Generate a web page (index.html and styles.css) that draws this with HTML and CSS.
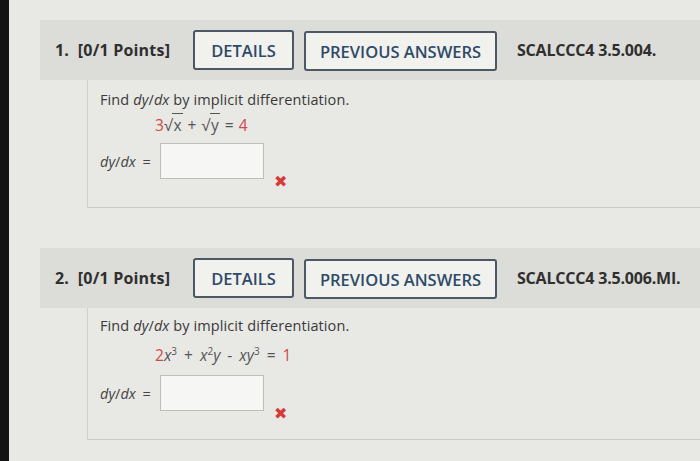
FILE: index.html
```html
<!DOCTYPE html>
<html>
<head>
<meta charset="utf-8">
<link rel="stylesheet" href="styles.css">
</head>
<body>
<div class="screen">
  <div class="bezel"></div>
  <div class="main">
    <div class="question">
      <div class="qhead">
        <div class="qnum">1.&nbsp; [0/1 Points]</div>
        <div class="btn btn-details">DETAILS</div>
        <div class="btn btn-prev">PREVIOUS ANSWERS</div>
        <div class="code">SCALCCC4 3.5.004.</div>
      </div>
      <div class="qbody">
        <div class="prompt">Find <i>dy</i>/<i>dx</i> by implicit differentiation.</div>
        <div class="eq"><span class="num">3</span>√<span class="rad">x</span> + √<span class="rad">y</span> = <span class="num">4</span></div>
        <div class="answer">
          <div class="lbl"><i>dy</i>/<i>dx</i> =</div>
          <div class="box"></div>
          <div class="wrong">✖</div>
        </div>
      </div>
    </div>
    <div class="question q2">
      <div class="qhead">
        <div class="qnum">2.&nbsp; [0/1 Points]</div>
        <div class="btn btn-details">DETAILS</div>
        <div class="btn btn-prev">PREVIOUS ANSWERS</div>
        <div class="code">SCALCCC4 3.5.006.MI.</div>
      </div>
      <div class="qbody">
        <div class="prompt">Find <i>dy</i>/<i>dx</i> by implicit differentiation.</div>
        <div class="eq eq2"><span class="num">2</span><i>x</i><sup>3</sup> + <i>x</i><sup>2</sup><i>y</i> - <i>xy</i><sup>3</sup> = <span class="num">1</span></div>
        <div class="answer">
          <div class="lbl"><i>dy</i>/<i>dx</i> =</div>
          <div class="box"></div>
          <div class="wrong">✖</div>
        </div>
      </div>
    </div>
  </div>
</div>
</body>
</html>
```

FILE: styles.css
```css
html, body {
  margin: 0;
  padding: 0;
  width: 700px;
  height: 461px;
  overflow: hidden;
  background: #e8e8e5;
  font-family: "Open Sans", "Liberation Sans", sans-serif;
  color: #333;
}
.screen {
  display: flex;
  height: 461px;
}
.bezel {
  width: 9px;
  flex: none;
  background: #141414;
}
.main {
  flex: 1;
  padding: 20px 0 0 31px;
}
.question {
  margin-bottom: 40px;
}
.qhead {
  height: 60px;
  background: #dcdcd8;
  display: flex;
  align-items: center;
  padding-left: 15px;
}
.qnum {
  width: 138px;
  font-weight: 700;
  font-size: 16px;
  letter-spacing: 0.2px;
  color: #2f2f2f;
  white-space: nowrap;
}
.btn {
  box-sizing: border-box;
  height: 40px;
  border: 2px solid #4c5866;
  border-radius: 3px;
  background: #f1f1ee;
  color: #2e4a68;
  font-weight: 600;
  font-size: 16.5px;
  display: flex;
  align-items: center;
  justify-content: center;
  white-space: nowrap;
}
.btn-details {
  width: 101px;
}
.btn-prev {
  width: 193px;
  margin-left: 10px;
  margin-top: 2px;
}
.code {
  margin-left: 20px;
  font-weight: 700;
  font-size: 16px;
  letter-spacing: -0.2px;
  color: #2f2f2f;
  white-space: nowrap;
}
.qbody {
  margin-left: 47px;
  height: 128px;
  border-left: 1px solid #cfcfcc;
  border-bottom: 1px solid #c8c8c5;
  padding: 10px 0 0 12px;
  box-sizing: border-box;
  font-size: 14.5px;
  color: #3a3a3a;
}
.q2 .qbody {
  height: 132px;
  padding-top: 8px;
}
.prompt {
  height: 20px;
  line-height: 20px;
  letter-spacing: 0.1px;
}
.eq {
  margin: 5px 0 0 55px;
  height: 20px;
  line-height: 20px;
  color: #555;
  font-size: 15.5px;
  word-spacing: 1px;
}
.eq2 {
  margin-top: 9px;
  word-spacing: 3px;
}
.eq sup {
  font-size: 10px;
  line-height: 0;
}
.num {
  color: #d24848;
}
.rad {
  border-top: 1px solid #555;
  padding: 0 1px;
}
.answer {
  display: flex;
  align-items: center;
  margin-top: 8px;
}
.q2 .answer {
  margin-top: 10px;
}
.lbl {
  width: 60px;
  color: #444;
  white-space: nowrap;
  word-spacing: 3px;
}
.box {
  width: 102px;
  height: 34px;
  background: #f6f6f4;
  border: 1px solid #bdbdba;
}
.wrong {
  align-self: flex-end;
  margin: 0 0 -12px 10px;
  color: #d83a3a;
  font-size: 16px;
  font-family: "DejaVu Sans", sans-serif;
}
```
